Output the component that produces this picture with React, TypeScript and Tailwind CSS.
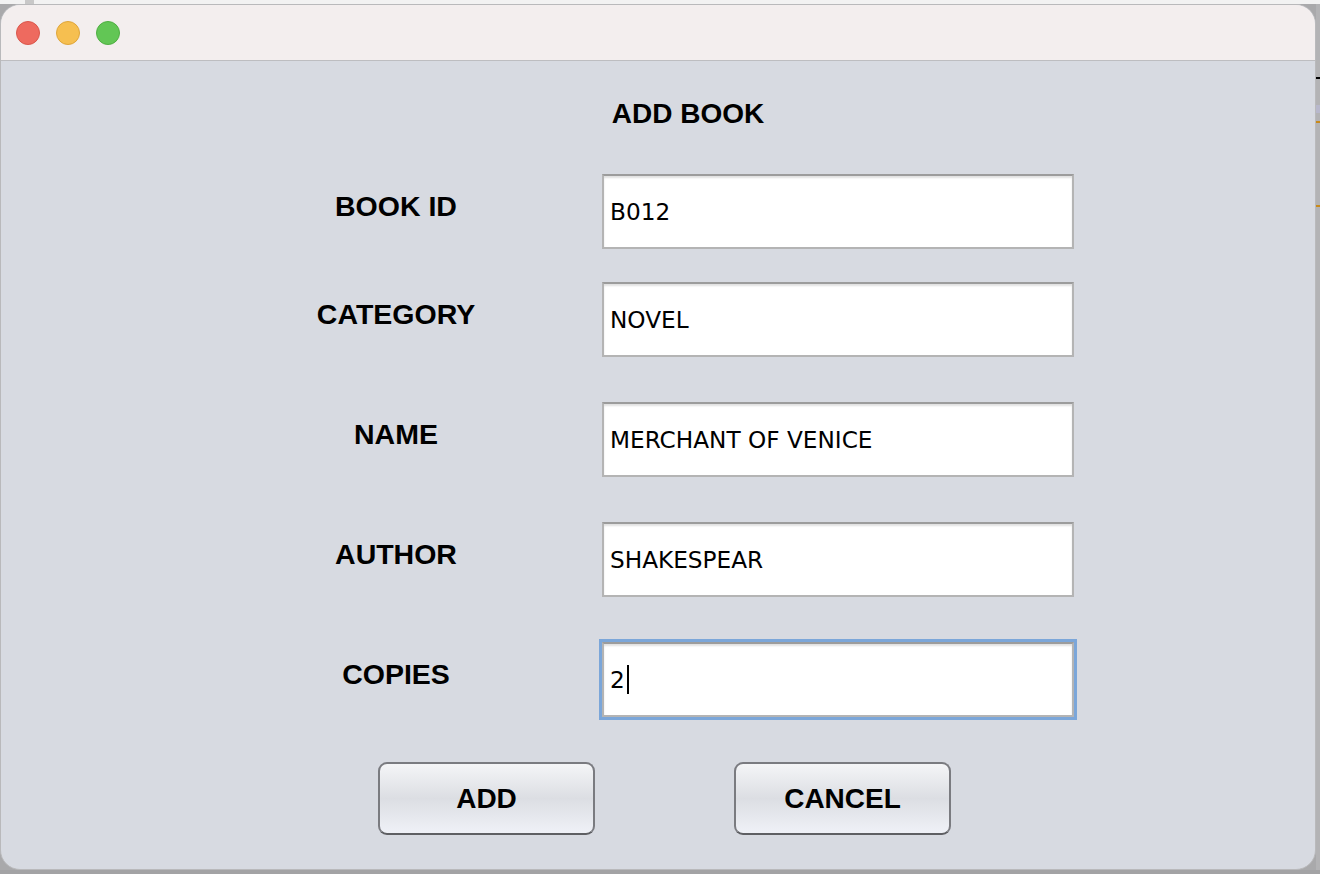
import React from "react";

const labelCls =
  "w-[200px] ml-[295px] pt-[16px] text-center text-[28.5px] leading-[32px] font-bold text-black whitespace-nowrap";
const fieldFont = { fontFamily: '"DejaVu Sans", sans-serif' };

function Row({
  label,
  value,
  focused,
  mt,
}: {
  label: string;
  value: string;
  focused?: boolean;
  mt: string;
}) {
  return (
    <div className={`flex items-start ${mt}`}>
      <div className={labelCls}>{label}</div>
      <div
        className={`ml-[106px] w-[472px] h-[75px] bg-white border-2 border-[#b4b4b4] border-t-[#9c9c9c] shadow-[inset_0_2px_2px_rgba(0,0,0,0.12)] flex items-center pl-[6px] ${
          focused ? "outline outline-[3px] outline-[#7ba6d9]" : ""
        }`}
      >
        <span className="text-[23.2px] text-black leading-none" style={fieldFont}>
          {value}
        </span>
        {focused && <span className="ml-[2px] w-[2px] h-[29px] bg-black" />}
      </div>
    </div>
  );
}

function Btn({ children }: { children: React.ReactNode }) {
  return (
    <button className="w-[217px] h-[73px] rounded-[9px] border-2 border-[#7a7b80] border-b-[#5e5f63] bg-gradient-to-b from-[#f4f5f7] via-[#dcdee3] to-[#eff1f7] text-[28px] font-bold text-black flex items-center justify-center">
      {children}
    </button>
  );
}

export default function App() {
  return (
    <div
      className="w-[1320px] h-[874px] bg-[#a9a9ab] overflow-hidden flex flex-col"
      style={{ fontFamily: '"Liberation Sans", Arial, sans-serif' }}
    >
      <div className="h-[4px] bg-[#f2f2f2] flex shrink-0">
        <div className="ml-[25px] w-[9px] h-full bg-[#c8c8c8]" />
      </div>
      <div className="flex h-[866px] shrink-0">
        <div className="w-[1316px] h-[866px] rounded-[20px] overflow-hidden bg-[#d7dae1] border border-[#b9b9bb] flex flex-col shrink-0">
          {/* Title bar */}
          <div className="h-[56px] bg-[#f3eeee] border-b border-[#bdbdc0] flex items-center shrink-0 pl-[15px] gap-[16px]">
            <div className="w-[24px] h-[24px] rounded-full bg-[#ee6a5f] border border-[#d9574c]" />
            <div className="w-[24px] h-[24px] rounded-full bg-[#f6bf50] border border-[#dea53b]" />
            <div className="w-[24px] h-[24px] rounded-full bg-[#62c655] border border-[#4fae42]" />
          </div>
          {/* Body */}
          <div className="flex flex-col">
            <div className="mt-[37px] pl-[60px] text-center text-[28px] leading-[32px] font-bold text-black">
              ADD BOOK
            </div>
            <Row label="BOOK ID" value="B012" mt="mt-[44px]" />
            <Row label="CATEGORY" value="NOVEL" mt="mt-[33px]" />
            <Row label="NAME" value="MERCHANT OF VENICE" mt="mt-[45px]" />
            <Row label="AUTHOR" value="SHAKESPEAR" mt="mt-[45px]" />
            <Row label="COPIES" value="2" focused mt="mt-[45px]" />
            <div className="mt-[45px] ml-[377px] flex gap-[139px]">
              <Btn>ADD</Btn>
              <Btn>CANCEL</Btn>
            </div>
          </div>
        </div>
        <div className="flex-1 flex flex-col bg-[#b3b3b5]">
          <div className="mt-[73px] h-[2px] bg-black" />
          <div className="mt-[26px] h-[8px] bg-[#b8b8cc]" />
          <div className="mt-[8px] h-[2px] bg-[#c98a1a]" />
          <div className="mt-[82px] h-[2px] bg-[#c98a1a]" />
        </div>
      </div>
      <div className="h-[4px] bg-[#a3a3a5]" />
    </div>
  );
}
